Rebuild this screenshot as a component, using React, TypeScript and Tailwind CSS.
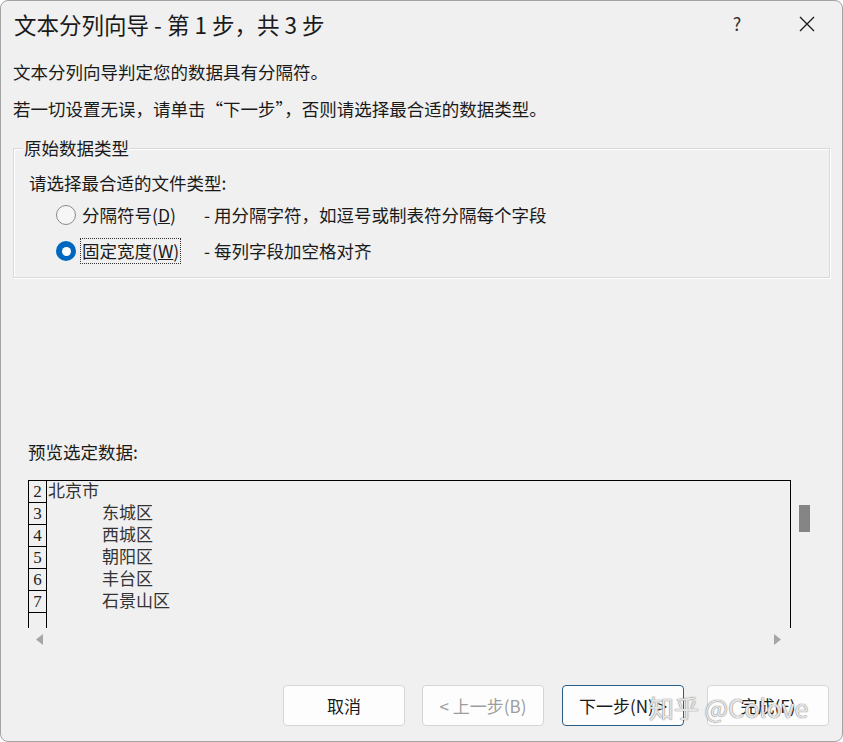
import React from 'react';

const ui = { fontFamily: '"Noto Sans CJK SC", "Noto Sans", sans-serif' };
const serif = { fontFamily: '"Liberation Serif", "Noto Sans CJK SC", serif' };

const rows = [
  { n: '2', text: '北京市', indent: false },
  { n: '3', text: '东城区', indent: true },
  { n: '4', text: '西城区', indent: true },
  { n: '5', text: '朝阳区', indent: true },
  { n: '6', text: '丰台区', indent: true },
  { n: '7', text: '石景山区', indent: true },
];

function Radio({ checked }: { checked: boolean }) {
  if (checked) {
    return (
      <span className="w-[20px] h-[20px] rounded-full bg-[#0067c0] flex items-center justify-center">
        <span className="w-[9px] h-[9px] rounded-full bg-white" />
      </span>
    );
  }
  return <span className="w-[20px] h-[20px] rounded-full border border-[#8a8a8a] bg-[#f6f6f6]" />;
}

function Button({ label, disabled, focused }: { label: string; disabled?: boolean; focused?: boolean }) {
  return (
    <button
      className={`w-[122px] h-[41px] rounded-[4px] bg-[#fdfdfd] text-[17px] flex items-center justify-center ${
        focused ? 'border border-[#2a5d86]' : 'border border-[#d5d5d5]'
      } ${disabled ? 'text-[#9d9d9d]' : 'text-[#1a1a1a]'}`}
    >
      {label}
    </button>
  );
}

export default function App() {
  return (
    <div
      style={ui}
      className="relative w-[843px] h-[742px] bg-[#f0f0f0] border border-[#a3a3a3] rounded-[8px] overflow-hidden text-[#1a1a1a]"
    >
      {/* Title bar */}
      <div className="h-[45px] flex items-center pl-[13px]">
        <div className="text-[22.5px] leading-[28px] flex-1">文本分列向导 - 第 1 步，共 3 步</div>
        <div className="w-[30px] text-center text-[18px] text-[#333] mr-[47px]">?</div>
        <svg width="16" height="16" viewBox="0 0 16 16" className="mr-[27px]">
          <path d="M1 1 L15 15 M15 1 L1 15" stroke="#1a1a1a" strokeWidth="1.3" fill="none" />
        </svg>
      </div>

      <div className="px-[12px]">
        <div className="mt-[14px] text-[17.5px] leading-[24px]">文本分列向导判定您的数据具有分隔符。</div>
        <div className="mt-[13px] text-[17.5px] leading-[24px]">若一切设置无误，请单击“下一步”，否则请选择最合适的数据类型。</div>

        {/* Group box */}
        <div className="relative mt-[27px] w-[817px] h-[130px] border border-[#d9d9d9] shadow-[inset_1px_1px_0_#ffffff,1px_1px_0_#ffffff]">
          <div className="absolute left-[9px] top-[-13px] px-[1px] bg-[#f0f0f0] text-[17.5px] leading-[24px]">原始数据类型</div>
          <div className="pt-[22px] pl-[15px]">
            <div className="text-[17.5px] leading-[24px]">请选择最合适的文件类型:</div>
            <div className="flex items-center h-[36px] pl-[27px] mt-[2px]">
              <Radio checked={false} />
              <span className="ml-[6px] w-[122px] text-[17.5px] leading-[24px]">
                分隔符号(<span className="underline">D</span>)
              </span>
              <span className="text-[17.5px] leading-[24px]">- 用分隔字符，如逗号或制表符分隔每个字段</span>
            </div>
            <div className="flex items-center h-[36px] pl-[27px]">
              <Radio checked={true} />
              <span className="ml-[5px] w-[123px] flex">
                <span className="text-[17.5px] leading-[24px] px-[1px] outline outline-1 outline-dotted outline-[#333]">
                  固定宽度(<span className="underline">W</span>)
                </span>
              </span>
              <span className="text-[17.5px] leading-[24px]">- 每列字段加空格对齐</span>
            </div>
          </div>
        </div>

        <div className="mt-[162px] pl-[15px] text-[17.5px] leading-[24px]">预览选定数据:</div>

        {/* Preview */}
        <div className="mt-[16px] pl-[15px] flex">
          <div className="w-[763px] h-[148px] border-t border-l border-r border-black overflow-hidden flex" style={serif}>
            <div className="w-[18px] border-r border-black flex flex-col">
              {rows.map((r) => (
                <div key={r.n} className="h-[22px] border-b border-black text-[17px] leading-[22px] text-center text-[#222]">
                  {r.n}
                </div>
              ))}
            </div>
            <div className="flex flex-col pl-[1px]">
              {rows.map((r) => (
                <div
                  key={r.n}
                  className={`h-[22px] text-[17px] leading-[22px] text-[#333] ${r.indent ? 'pl-[54px]' : ''}`}
                >
                  {r.text}
                </div>
              ))}
            </div>
          </div>
          <div className="w-[19px] pt-[25px] flex justify-end">
            <div className="w-[11px] h-[27px] bg-[#858585]" />
          </div>
        </div>
        <div className="ml-[15px] h-[23px] w-[763px] flex items-center justify-between px-[8px]">
          <svg width="8" height="11" viewBox="0 0 8 11">
            <path d="M7 0 L0 5.5 L7 11 Z" fill="#a5a5a5" />
          </svg>
          <svg width="8" height="11" viewBox="0 0 8 11" className="mr-[2px]">
            <path d="M1 0 L8 5.5 L1 11 Z" fill="#a5a5a5" />
          </svg>
        </div>

        {/* Buttons */}
        <div className="mt-[34px] flex pl-[270px]">
          <Button label="取消" />
          <div className="ml-[17px]">
            <Button label="< 上一步(B)" disabled />
          </div>
          <div className="ml-[18px]">
            <Button label="下一步(N) >" focused />
          </div>
          <div className="ml-[23px]">
            <Button label="完成(F)" />
          </div>
        </div>
      </div>

      {/* watermark */}
      <div
        className="absolute left-[648px] top-[690px] text-[25px] leading-[32px] text-white/80 whitespace-nowrap"
        style={{ textShadow: '0 0 1px #7a7a7a, 0 0 1px #7a7a7a' }}
      >
        知乎 @Colove
      </div>
    </div>
  );
}
